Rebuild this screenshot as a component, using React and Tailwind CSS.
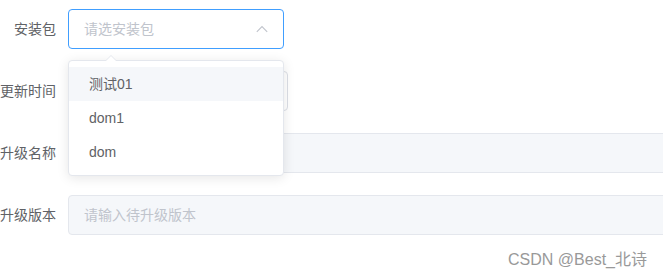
const font = { fontFamily: '"Liberation Sans", "Noto Sans CJK SC", sans-serif' };

const options = ["测试01", "dom1", "dom"];

const Label = ({ children }) => (
  <label className="w-[68px] shrink-0 pr-3 text-right text-sm text-[#606266] whitespace-nowrap">
    {children}
  </label>
);

const ChevronUp = () => (
  <svg width="12" height="8" viewBox="0 0 12 8" className="shrink-0">
    <polyline points="0.8,6.8 6,1.6 11.2,6.8" fill="none" stroke="#c0c4cc" strokeWidth="1.1" />
  </svg>
);

export default function App() {
  return (
    <div className="relative w-[663px] h-[276px] overflow-hidden bg-white" style={font}>
      <div className="flex flex-col gap-[22px] pt-[9px]">
        <div className="flex items-center">
          <Label>安装包</Label>
          <div className="flex items-center justify-between w-[216px] h-10 px-[15px] border border-[#409eff] rounded bg-white">
            <span className="text-sm text-[#c0c4cc]">请选安装包</span>
            <ChevronUp />
          </div>
        </div>

        <div className="flex items-center">
          <Label>更新时间</Label>
          <div className="w-[220px] h-10 border border-[#dcdfe6] rounded bg-white" />
        </div>

        <div className="flex items-center">
          <Label>升级名称</Label>
          <div className="w-[620px] shrink-0 h-10 border border-[#e4e7ed] rounded bg-[#f5f7fa]" />
        </div>

        <div className="flex items-center">
          <Label>升级版本</Label>
          <div className="flex items-center w-[620px] shrink-0 h-10 px-[15px] border border-[#e4e7ed] rounded bg-[#f5f7fa]">
            <span className="text-sm text-[#c0c4cc]">请输入待升级版本</span>
          </div>
        </div>
      </div>

      {/* dropdown */}
      <div className="absolute left-[68px] top-[60px] w-[216px] rounded border border-[#e4e7ed] bg-white py-[6px] shadow-[0_2px_12px_0_rgba(0,0,0,0.1)]">
        <div className="absolute -top-[6px] left-[36px] w-0 h-0 border-x-[6px] border-x-transparent border-b-[6px] border-b-[#e4e7ed]" />
        <div className="absolute -top-[5px] left-[36px] w-0 h-0 border-x-[6px] border-x-transparent border-b-[6px] border-b-white" />
        {options.map((o, i) => (
          <div
            key={o}
            className={
              "h-[34px] leading-[34px] px-5 text-sm text-[#606266] " +
              (i === 0 ? "bg-[#f5f7fa]" : "")
            }
          >
            {o}
          </div>
        ))}
      </div>

      <div className="absolute right-[16px] bottom-[8px] text-base text-[#999] leading-none">
        CSDN @Best_北诗
      </div>
    </div>
  );
}
